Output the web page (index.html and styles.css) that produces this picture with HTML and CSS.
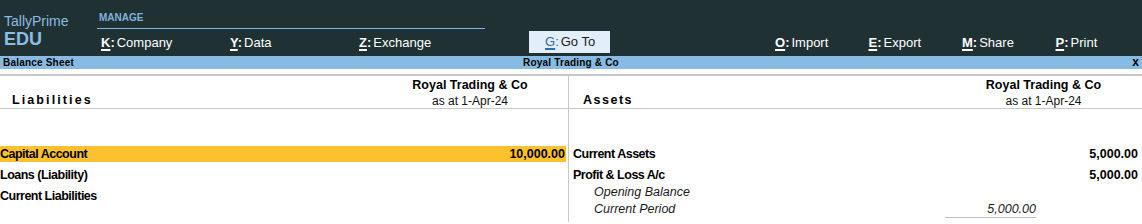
FILE: index.html
```html
<!DOCTYPE html>
<html lang="en">
<head>
<meta charset="utf-8">
<title>TallyPrime EDU - Balance Sheet</title>
<link rel="stylesheet" href="styles.css">
</head>
<body>
<header class="topbar">
  <div class="brand">
    <div class="brand-name">TallyPrime</div>
    <div class="brand-edu">EDU</div>
  </div>
  <nav class="manage">
    <div class="manage-label">MANAGE</div>
    <div class="manage-items">
      <div class="menu-item"><span class="key"><span class="hot">K</span>:</span>Company</div>
      <div class="menu-item"><span class="key"><span class="hot">Y</span>:</span>Data</div>
      <div class="menu-item"><span class="key"><span class="hot">Z</span>:</span>Exchange</div>
    </div>
  </nav>
  <div class="goto"><span class="key key-blue"><span class="hot">G</span>:</span>Go To</div>
  <nav class="actions">
    <div class="menu-item narrow"><span class="key"><span class="hot">O</span>:</span>Import</div>
    <div class="menu-item narrow"><span class="key"><span class="hot">E</span>:</span>Export</div>
    <div class="menu-item narrow"><span class="key"><span class="hot">M</span>:</span>Share</div>
    <div class="menu-item narrow last"><span class="key"><span class="hot">P</span>:</span>Print</div>
  </nav>
</header>

<div class="titlebar">
  <div class="title-left">Balance Sheet</div>
  <div class="title-center">Royal Trading &amp; Co</div>
  <div class="title-right">x</div>
</div>

<main class="report">
  <section class="side side-left">
    <div class="col-head">
      <div class="side-title">Liabilities</div>
      <div class="period">
        <div class="period-company">Royal Trading &amp; Co</div>
        <div class="period-date">as at 1-Apr-24</div>
      </div>
    </div>
    <div class="rows">
      <div class="row row-selected">
        <span class="label">Capital Account</span>
        <span class="amount">10,000.00</span>
      </div>
      <div class="row">
        <span class="label">Loans (Liability)</span>
        <span class="amount"></span>
      </div>
      <div class="row">
        <span class="label">Current Liabilities</span>
        <span class="amount"></span>
      </div>
    </div>
  </section>

  <section class="side side-right">
    <div class="col-head">
      <div class="side-title">Assets</div>
      <div class="period">
        <div class="period-company">Royal Trading &amp; Co</div>
        <div class="period-date">as at 1-Apr-24</div>
      </div>
    </div>
    <div class="rows">
      <div class="row rrow">
        <span class="label">Current Assets</span>
        <span class="sub"></span>
        <span class="amount">5,000.00</span>
      </div>
      <div class="row rrow">
        <span class="label">Profit &amp; Loss A/c</span>
        <span class="sub"></span>
        <span class="amount">5,000.00</span>
      </div>
      <div class="row rrow subrow">
        <span class="label">Opening Balance</span>
        <span class="sub"></span>
        <span class="amount"></span>
      </div>
      <div class="row rrow subrow">
        <span class="label">Current Period</span>
        <span class="sub sub-total">5,000.00</span>
        <span class="amount"></span>
      </div>
    </div>
  </section>
</main>
</body>
</html>
```

FILE: styles.css
```css
* { box-sizing: border-box; }

html, body {
  margin: 0;
  padding: 0;
  background: #ffffff;
}

body {
  font-family: "Liberation Sans", Arial, sans-serif;
  color: #000;
  width: 1142px;
  height: 224px;
  overflow: hidden;
}

/* ---------- top bar ---------- */
.topbar {
  height: 56px;
  background: #203133;
  display: flex;
  align-items: flex-start;
}

.topbar > * { flex-shrink: 0; }

.brand {
  width: 97px;
  padding: 13px 0 0 4px;
  color: #8cbbe2;
}

.brand-name {
  font-size: 14px;
  line-height: 16px;
}

.brand-edu {
  font-size: 18px;
  line-height: 20px;
  font-weight: bold;
  color: #8ebde4;
}

.manage {
  width: 388px;
  padding-top: 12px;
}

.manage-label {
  font-size: 10px;
  line-height: 12px;
  font-weight: bold;
  color: #7fb1de;
  padding-left: 2px;
  padding-bottom: 4px;
  border-bottom: 1px solid #7fb3e2;
}

.manage-items {
  display: flex;
  padding: 6px 0 0 4px;
}

.menu-item {
  flex-shrink: 0;
  width: 129px;
  font-size: 13px;
  line-height: 16px;
  color: #ffffff;
  white-space: nowrap;
}

.menu-item.narrow {
  width: 93.5px;
}

.menu-item.last {
  width: auto;
}

.key {
  font-weight: bold;
  margin-right: 2px;
}

.hot {
  text-decoration: underline;
  text-decoration-thickness: 1.5px;
  text-underline-offset: 2px;
}

.goto {
  margin: 31px 0 0 44px;
  width: 81px;
  height: 22px;
  line-height: 22px;
  padding-left: 16px;
  background: #e2eefa;
  color: #1c1c1c;
  font-size: 13px;
  white-space: nowrap;
}

.key-blue {
  color: #2d6bb3;
  font-weight: normal;
}

.actions {
  display: flex;
  margin-left: 165px;
  padding-top: 35px;
}

/* ---------- title bar ---------- */
.titlebar {
  height: 13px;
  background: #87bbe3;
  display: grid;
  grid-template-columns: 1fr auto 1fr;
  font-size: 10px;
  line-height: 13px;
  font-weight: bold;
  letter-spacing: 0.2px;
  color: #000;
}

.title-left { padding-left: 3px; }

.title-right {
  text-align: right;
  padding-right: 3px;
  font-size: 12px;
  letter-spacing: 0;
}

/* ---------- report ---------- */
.report {
  margin-top: 5px;
  border-top: 2px solid #c8c8c8;
  display: grid;
  grid-template-columns: 569px 1fr;
  height: 148px;
}

.side-left {
  border-right: 1px solid #c8c8c8;
}

.col-head {
  height: 33px;
  border-bottom: 1px solid #c8c8c8;
  display: flex;
  justify-content: space-between;
  align-items: flex-end;
  padding-top: 2px;
}

.side-title {
  font-size: 12.5px;
  font-weight: bold;
  letter-spacing: 2.1px;
  line-height: 15px;
  padding: 0 0 0 12px;
}

.side-right .side-title {
  padding-left: 14px;
  letter-spacing: 1.5px;
}

.period {
  width: 196px;
  text-align: center;
  align-self: flex-start;
}

.side-right .period {
  width: 197px;
}

.period-company {
  font-size: 12.5px;
  font-weight: bold;
  line-height: 15.5px;
}

.period-date {
  font-size: 12px;
  line-height: 15px;
  color: #111;
}

.rows {
  padding-top: 32px;
}

.row {
  display: flex;
  justify-content: space-between;
  height: 16px;
  line-height: 16px;
  margin-top: 5px;
  font-size: 12.5px;
  font-weight: bold;
  color: #000;
}

.label {
  letter-spacing: -0.5px;
  white-space: nowrap;
}

.amount {
  font-size: 12.5px;
}

.side-left .row {
  margin-right: 2px;
  padding-right: 1px;
}

.row-selected {
  background: #fcc22e;
}

.rrow {
  display: grid;
  grid-template-columns: 1fr 91px 98px;
  column-gap: 4px;
  padding: 0 4px;
}

.rrow .amount {
  text-align: right;
}

.subrow {
  margin-top: 1px;
  font-weight: normal;
  font-style: italic;
  font-size: 12.5px;
  color: #1a1a1a;
}

.subrow .label {
  padding-left: 21px;
  letter-spacing: 0;
}

.sub {
  text-align: right;
}

.sub-total {
  border-bottom: 1px solid #c0c0c0;
  height: 17px;
}
```
